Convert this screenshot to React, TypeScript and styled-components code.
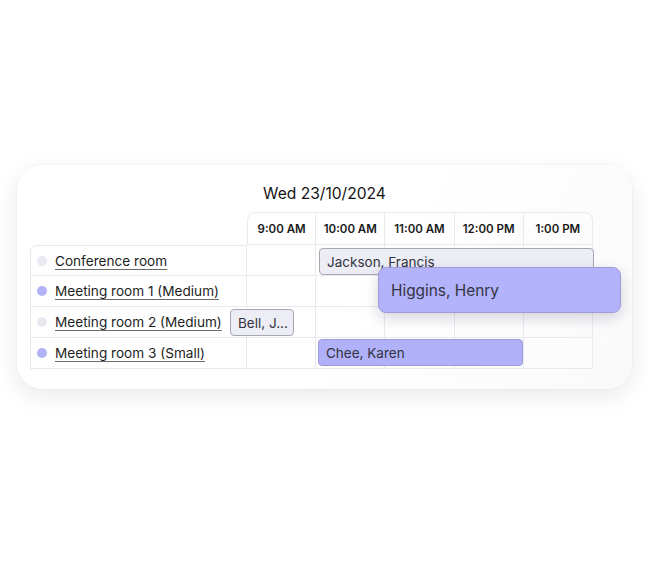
import React from 'react';
import styled, { createGlobalStyle } from 'styled-components';

const GlobalStyle = createGlobalStyle`
  html, body {
    margin: 0;
    padding: 0;
    background: #ffffff;
    font-family: Inter, "Noto Sans", sans-serif;
    -webkit-font-smoothing: antialiased;
  }
`;

const HOURS = ['9:00 AM', '10:00 AM', '11:00 AM', '12:00 PM', '1:00 PM'];

const ROOMS = [
  { name: 'Conference room', tone: 'light' },
  { name: 'Meeting room 1 (Medium)', tone: 'purple' },
  { name: 'Meeting room 2 (Medium)', tone: 'light' },
  { name: 'Meeting room 3 (Small)', tone: 'purple' },
];

const EVENTS = [
  { title: 'Jackson, Francis', tone: 'light', left: 289, top: 3, width: 275, height: 27 },
  { title: 'Bell, J...', tone: 'light', left: 200, top: 64, width: 64, height: 27 },
  { title: 'Chee, Karen', tone: 'purple', left: 288, top: 94, width: 205, height: 27 },
  { title: 'Higgins, Henry', tone: 'drag', left: 348, top: 22, width: 243, height: 46 },
];

const LINE = '#e9e9ee';
const COLS = '217px repeat(5, 69.2px)';

const Page = styled.div`
  padding: 165px 0 0 17px;
  height: 582px;
  box-sizing: border-box;
`;

const Card = styled.div`
  width: 615px;
  height: 224px;
  box-sizing: border-box;
  padding: 19px 13px 0;
  border-radius: 26px;
  background: linear-gradient(120deg, #ffffff 55%, #fafafb 100%);
  box-shadow: 0 7px 24px rgba(20, 20, 40, 0.09), 0 0 0 1px rgba(20, 20, 40, 0.025);
`;

const Title = styled.div`
  text-align: center;
  font-size: 15.6px;
  line-height: 20px;
  color: #141414;
  margin-bottom: 8px;
`;

const Scheduler = styled.div`
  width: 563px;
`;

const HeaderRow = styled.div`
  display: grid;
  grid-template-columns: ${COLS};
  height: 33px;
`;

const HeaderCell = styled.div`
  display: flex;
  align-items: center;
  justify-content: center;
  font-size: 11.5px;
  font-weight: 600;
  color: #1a1a1a;
  border-top: 1px solid ${LINE};
  border-right: 1px solid ${LINE};
  border-bottom: 1px solid ${LINE};
  &:nth-child(2) {
    border-left: 1px solid ${LINE};
    border-top-left-radius: 8px;
  }
  &:last-child {
    border-top-right-radius: 8px;
  }
`;

const Body = styled.div`
  position: relative;
`;

const Row = styled.div`
  display: grid;
  grid-template-columns: ${COLS};
  height: 31px;
  box-sizing: border-box;
`;

const LabelCell = styled.div`
  display: flex;
  align-items: center;
  gap: 8px;
  padding-left: 6px;
  border-left: 1px solid ${LINE};
  border-right: 1px solid ${LINE};
  border-bottom: 1px solid ${LINE};
  ${Row}:first-child & {
    border-top: 1px solid ${LINE};
    border-top-left-radius: 6px;
  }
  ${Row}:last-child & {
    border-bottom-left-radius: 6px;
  }
`;

const Dot = styled.span<{ $tone: string }>`
  width: 10px;
  height: 10px;
  border-radius: 50%;
  flex-shrink: 0;
  background: ${(p) => (p.$tone === 'purple' ? '#b2b2f6' : '#e9e9f2')};
`;

const RoomLink = styled.a`
  font-size: 13.6px;
  color: #1e1e1e;
  text-decoration: underline;
  text-decoration-color: #6a6a6a;
  text-underline-offset: 3px;
  cursor: pointer;
`;

const SlotCell = styled.div`
  border-right: 1px solid ${LINE};
  border-bottom: 1px solid ${LINE};
`;

const toneStyles: Record<string, string> = {
  light: 'background:#ededf6; border:1px solid #a7a7b4; border-radius:4px; font-size:13.5px; padding-left:7px;',
  purple: 'background:#b1b1fa; border:1px solid #9c9cd8; border-radius:4px; font-size:13.5px; padding-left:7px;',
  drag: 'background:#b3b3fb; border:1px solid #9c9cd6; border-radius:8px; font-size:15.4px; padding-left:12px; box-shadow:0 5px 14px rgba(30,30,70,0.18);',
};

const Event = styled.div<{ $tone: string; $left: number; $top: number; $width: number; $height: number }>`
  position: absolute;
  box-sizing: border-box;
  left: ${(p) => p.$left}px;
  top: ${(p) => p.$top}px;
  width: ${(p) => p.$width}px;
  height: ${(p) => p.$height}px;
  display: flex;
  align-items: center;
  color: #33333f;
  white-space: nowrap;
  overflow: hidden;
  ${(p) => toneStyles[p.$tone]}
`;

export default function App() {
  return (
    <>
      <GlobalStyle />
      <Page>
        <Card>
          <Title>Wed 23/10/2024</Title>
          <Scheduler>
            <HeaderRow>
              <div />
              {HOURS.map((h) => (
                <HeaderCell key={h}>{h}</HeaderCell>
              ))}
            </HeaderRow>
            <Body>
              {ROOMS.map((room) => (
                <Row key={room.name}>
                  <LabelCell>
                    <Dot $tone={room.tone} />
                    <RoomLink>{room.name}</RoomLink>
                  </LabelCell>
                  {HOURS.map((h) => (
                    <SlotCell key={h} />
                  ))}
                </Row>
              ))}
              {EVENTS.map((ev) => (
                <Event
                  key={ev.title}
                  $tone={ev.tone}
                  $left={ev.left}
                  $top={ev.top}
                  $width={ev.width}
                  $height={ev.height}
                >
                  {ev.title}
                </Event>
              ))}
            </Body>
          </Scheduler>
        </Card>
      </Page>
    </>
  );
}
